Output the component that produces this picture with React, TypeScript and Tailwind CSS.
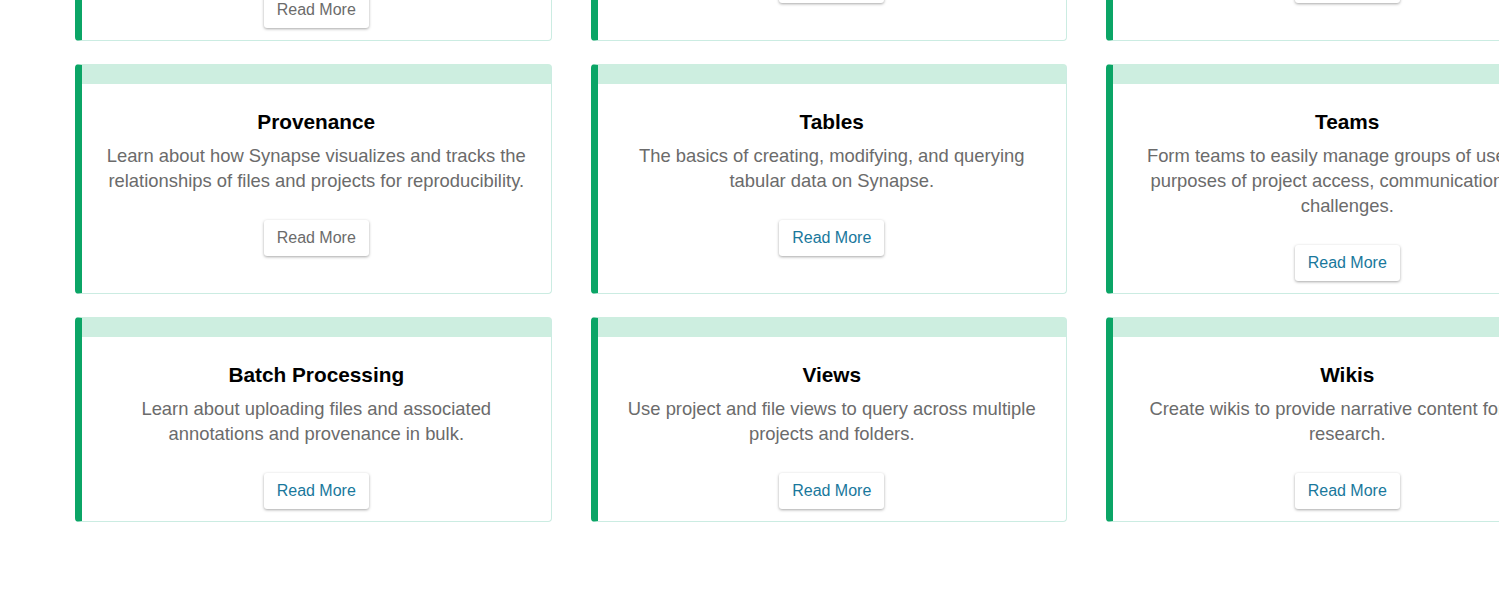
import React from "react";

type Topic = {
  title: string;
  text: string;
  visited?: boolean;
};

const topics: Topic[] = [
  {
    title: "Annotations and Queries",
    text: "Add annotations to files, folders and projects so that your data can be found and queried by the attributes that matter to you.",
    visited: true,
  },
  {
    title: "Versioning",
    text: "Keep track of every change made to your files with automatic version history.",
  },
  {
    title: "Sharing Settings",
    text: "Control who can see, download and edit the content in your projects.",
  },
  {
    title: "Provenance",
    text: "Learn about how Synapse visualizes and tracks the relationships of files and projects for reproducibility.",
    visited: true,
  },
  {
    title: "Tables",
    text: "The basics of creating, modifying, and querying tabular data on Synapse.",
  },
  {
    title: "Teams",
    text: "Form teams to easily manage groups of users for purposes of project access, communication, and challenges.",
  },
  {
    title: "Batch Processing",
    text: "Learn about uploading files and associated annotations and provenance in bulk.",
  },
  {
    title: "Views",
    text: "Use project and file views to query across multiple projects and folders.",
  },
  {
    title: "Wikis",
    text: "Create wikis to provide narrative content for your research.",
  },
];

function TopicCard({ topic }: { topic: Topic }) {
  return (
    <div className="flex flex-col rounded-[4px] border border-[#cbece2] border-t-[#cdeee0] border-l-[7px] border-l-[#0ba566] bg-white">
      <div className="h-[19px] bg-[#cdeee0]" />
      <div className="flex flex-col items-center px-[22px] pt-[26px] pb-[12px] text-center">
        <h3 className="text-[20.8px] leading-[24px] font-bold text-black">{topic.title}</h3>
        <p className="mt-[8.5px] text-[18.4px] leading-[25px] text-[#6b6b6b]">{topic.text}</p>
        <a
          href="#"
          className={`mt-[27.5px] inline-block rounded-[3px] bg-white px-[13px] py-[8px] text-[16px] leading-[20px] shadow-[0_1px_3px_rgba(0,0,0,0.35)] ${
            topic.visited ? "text-[#6b6b6b]" : "text-[#19789c]"
          }`}
        >
          Read More
        </a>
      </div>
    </div>
  );
}

export default function App() {
  return (
    <div className="h-[600px] w-full overflow-hidden bg-white font-['Liberation_Sans',Arial,sans-serif]">
      <div className="-mt-[189px] grid grid-cols-[476.5px_476.5px_476.5px] gap-x-[39px] gap-y-[23px] pl-[75px]">
        {topics.map((t) => (
          <TopicCard key={t.title} topic={t} />
        ))}
      </div>
    </div>
  );
}
